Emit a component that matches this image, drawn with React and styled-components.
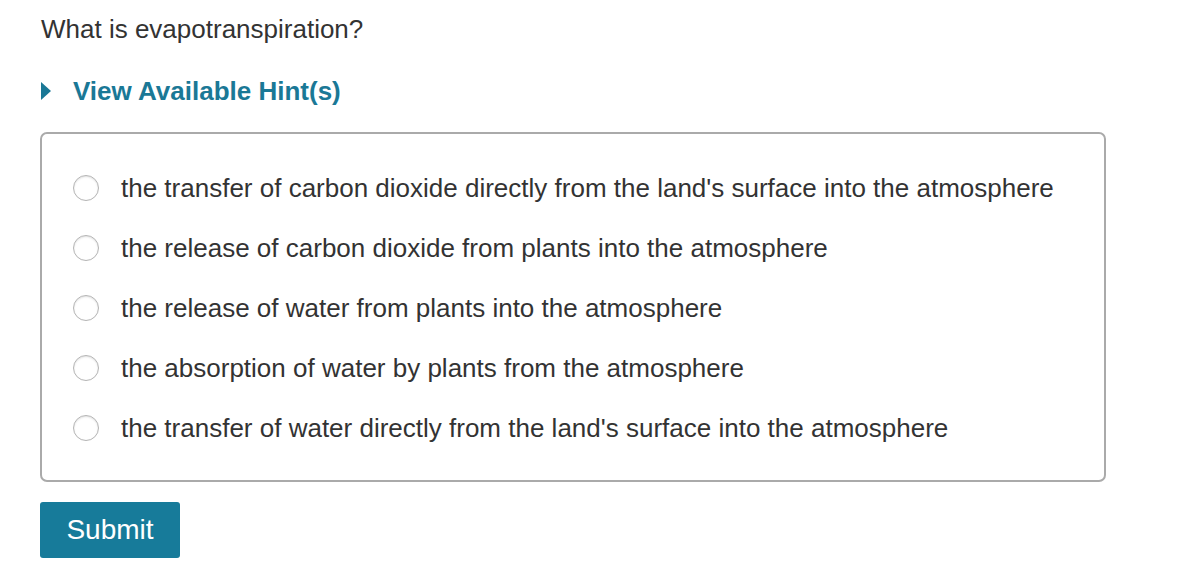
import React from "react";
import styled, { createGlobalStyle } from "styled-components";

const options = [
  "the transfer of carbon dioxide directly from the land's surface into the atmosphere",
  "the release of carbon dioxide from plants into the atmosphere",
  "the release of water from plants into the atmosphere",
  "the absorption of water by plants from the atmosphere",
  "the transfer of water directly from the land's surface into the atmosphere"
];

const GlobalStyle = createGlobalStyle`
  body {
    margin: 0;
    background: #fff;
    font-family: "Liberation Sans", Arial, sans-serif;
    color: #333;
  }
`;

export default function App() {
  return (
    <Page>
      <GlobalStyle />
      <Question>What is evapotranspiration?</Question>
      <HintToggle>
        <Caret viewBox="0 0 10 18" aria-hidden="true">
          <polygon points="0,0 10,9 0,18" fill="#1a7896" />
        </Caret>
        View Available Hint(s)
      </HintToggle>
      <Choices>
        {options.map((text, i) => (
          <Choice key={i}>
            <Radio />
            <ChoiceText>{text}</ChoiceText>
          </Choice>
        ))}
      </Choices>
      <SubmitButton>Submit</SubmitButton>
    </Page>
  );
}

const Page = styled.div`
  padding: 14px 40px 0 40px;
  width: 1066px;
`;

const Question = styled.div`
  font-size: 26px;
  line-height: 30px;
  color: #333;
  padding-left: 1px;
`;

const HintToggle = styled.div`
  display: flex;
  align-items: center;
  margin-top: 32px;
  height: 30px;
  font-size: 26px;
  font-weight: bold;
  color: #1a7896;
`;

const Caret = styled.svg`
  width: 10px;
  height: 18px;
  margin-left: 1px;
  margin-right: 22px;
`;

const Choices = styled.div`
  margin-top: 26px;
  border: 2px solid #aaa;
  border-radius: 7px;
  padding: 39px 0 37px 31px;
  display: flex;
  flex-direction: column;
  gap: 30px;
`;

const Choice = styled.div`
  display: flex;
  align-items: center;
  height: 30px;
`;

const Radio = styled.span`
  width: 26px;
  height: 26px;
  border-radius: 50%;
  border: 1px solid #b4b4b4;
  box-sizing: border-box;
  background: #fff;
  box-shadow: inset 0 1px 2px rgba(0, 0, 0, 0.12);
  margin-right: 22px;
  flex-shrink: 0;
`;

const ChoiceText = styled.span`
  font-size: 26px;
  color: #333;
`;

const SubmitButton = styled.button`
  margin-top: 20px;
  width: 140px;
  height: 56px;
  border: none;
  border-radius: 3px;
  background: #177b9a;
  color: #fff;
  font-family: "Liberation Sans", Arial, sans-serif;
  font-size: 28px;
  padding: 0;
`;
